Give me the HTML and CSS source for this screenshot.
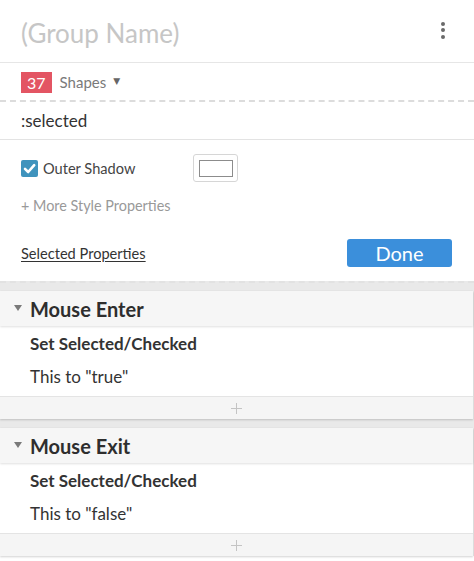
FILE: index.html
```html
<!DOCTYPE html>
<html>
<head>
<meta charset="utf-8">
<link rel="stylesheet" href="styles.css">
</head>
<body>
<div class="header">
  <div class="title">(Group Name)</div>
  <div class="kebab"><span></span><span></span><span></span></div>
</div>
<div class="shapes">
  <span class="badge">37</span>
  <span class="shapes-label">Shapes</span>
  <span class="caret">&#9660;</span>
</div>
<div class="state">:selected</div>
<div class="props">
  <div class="check-row">
    <span class="checkbox"><svg width="17" height="17" viewBox="0 0 17 17"><path d="M4 8.8 L7.2 12 L13.2 5.2" fill="none" stroke="#fff" stroke-width="2.6" stroke-linecap="round" stroke-linejoin="round"/></svg></span>
    <span class="check-label">Outer Shadow</span>
    <span class="swatch"><span class="swatch-inner"></span></span>
  </div>
  <div class="more">+ More Style Properties</div>
  <div class="actions">
    <span class="link">Selected Properties</span>
    <span class="done">Done</span>
  </div>
</div>
<div class="events">
  <div class="event">
    <div class="event-head"><span class="tri"></span>Mouse Enter</div>
    <div class="event-body">
      <div class="action-name">Set Selected/Checked</div>
      <div class="action-desc">This to "true"</div>
    </div>
    <div class="add"><svg width="11" height="11" viewBox="0 0 11 11"><path d="M5.5 0 V11 M0 5.5 H11" stroke="#c4c4c4" stroke-width="1"/></svg></div>
  </div>
  <div class="event">
    <div class="event-head"><span class="tri"></span>Mouse Exit</div>
    <div class="event-body">
      <div class="action-name">Set Selected/Checked</div>
      <div class="action-desc">This to "false"</div>
    </div>
    <div class="add"><svg width="11" height="11" viewBox="0 0 11 11"><path d="M5.5 0 V11 M0 5.5 H11" stroke="#c4c4c4" stroke-width="1"/></svg></div>
  </div>
</div>
</body>
</html>
```
FILE: styles.css
```css
html, body {
  margin: 0;
  padding: 0;
  background: #fff;
  font-family: Lato, "Open Sans", "DejaVu Sans", sans-serif;
  color: #333;
}
.header {
  height: 62px;
  display: flex;
  align-items: center;
  justify-content: space-between;
  padding: 0 29px 0 21px;
  border-bottom: 1px solid #e6e6e6;
}
.title {
  font-size: 26px;
  color: #c6c6c6;
  margin-top: 4px;
}
.kebab {
  display: flex;
  flex-direction: column;
  gap: 2.5px;
  margin-top: -2px;
}
.kebab span {
  width: 4px;
  height: 4px;
  border-radius: 50%;
  background: #6a6a6a;
}
.shapes {
  height: 37px;
  display: flex;
  align-items: center;
  padding-left: 21px;
  border-bottom: 2px dashed #dcdcdc;
}
.badge {
  background: #e35563;
  color: #fff;
  font-size: 16px;
  height: 21px;
  line-height: 21px;
  padding: 0 6px;
  margin-top: 1px;
}
.shapes-label {
  font-size: 15px;
  color: #7a7a7a;
  margin-left: 8px;
}
.caret {
  font-size: 9px;
  color: #666;
  margin-left: 7px;
  margin-top: -2px;
}
.state {
  height: 37px;
  line-height: 37px;
  padding-left: 21px;
  font-size: 17px;
  color: #333;
  border-bottom: 1px solid #e3e3e3;
}
.props {
  padding: 13px 21px 14px 21px;
}
.check-row {
  display: flex;
  align-items: center;
  height: 30px;
}
.checkbox {
  width: 17px;
  height: 17px;
  background: #3f93bd;
  border-radius: 2px;
  display: inline-block;
}
.checkbox svg { display: block; }
.check-label {
  font-size: 14.6px;
  color: #444;
  margin-left: 5px;
  width: 150px;
}
.swatch {
  width: 43px;
  height: 26px;
  border: 1px solid #d6d6d6;
  border-radius: 3px;
  display: flex;
  align-items: center;
  justify-content: center;
}
.swatch-inner {
  width: 34px;
  height: 17px;
  border: 1.5px solid #8c8c8c;
  box-sizing: border-box;
  background: #fff;
}
.more {
  font-size: 14.4px;
  color: #999;
  margin-top: 13px;
  height: 20px;
  line-height: 20px;
}
.actions {
  display: flex;
  justify-content: space-between;
  align-items: center;
  margin-top: 23px;
}
.link {
  font-size: 14.6px;
  color: #333;
  text-decoration: underline;
  text-underline-offset: 2px;
}
.done {
  width: 105px;
  height: 28px;
  line-height: 28px;
  text-align: center;
  background: #3b8fdb;
  color: #fff;
  font-size: 20px;
  border-radius: 3px;
  margin-right: 1px;
}
.events {
  background: #e9e9e9;
  padding-top: 8px;
  border-top: 2px dashed #e2e2e2;
}
.event {
  margin-bottom: 9px;
  box-shadow: 0 1px 2px rgba(0,0,0,0.18);
  margin-right: 1px;
}
.event-head {
  height: 35px;
  background: #f6f6f6;
  display: flex;
  align-items: center;
  font-size: 20px;
  font-weight: bold;
  color: #2e2e2e;
  padding-left: 14px;
  box-shadow: 0 1px 2px rgba(0,0,0,0.12);
  position: relative;
}
.tri {
  width: 0;
  height: 0;
  border-left: 4px solid transparent;
  border-right: 4px solid transparent;
  border-top: 6px solid #7a7a7a;
  margin-right: 8px;
  margin-top: -2px;
}
.event-body {
  background: #fff;
  padding: 1px 0 3px 30px;
  font-size: 17px;
  line-height: 33px;
  color: #333;
}
.action-name { font-weight: bold; }
.add {
  height: 22px;
  background: #f5f5f5;
  border-top: 1px solid #e4e4e4;
  display: flex;
  align-items: center;
  justify-content: center;
}
.add svg { display: block; }
```
